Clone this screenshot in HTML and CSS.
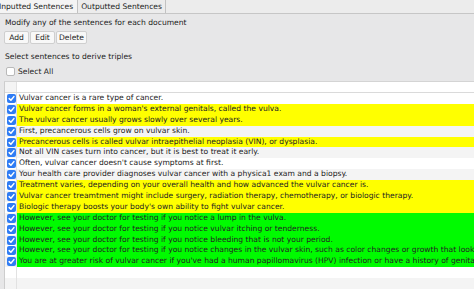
FILE: index.html
```html
<!DOCTYPE html>
<html lang="en">
<head>
  <meta charset="UTF-8">
  <meta name="viewport" content="width=device-width, initial-scale=1.0">
  <title>Sentences</title>
  <link rel="stylesheet" href="styles.css">
</head>
<body>
  <div class="tabs">
    <div class="tab active">Inputted Sentences</div>
    <div class="tab">Outputted Sentences</div>
  </div>

  <div class="panel">
    <p class="hint">Modify any of the sentences for each document</p>
    <div class="buttons">
      <button class="btn btn-add">Add</button>
      <button class="btn btn-edit">Edit</button>
      <button class="btn btn-delete">Delete</button>
    </div>
    <p class="hint">Select sentences to derive triples</p>
    <label class="select-all"><span class="box"></span>Select All</label>
  </div>

  <div class="table">
    <div class="row head"><div class="check"></div><div class="text"></div></div>

    <div class="row"><div class="check"><span class="box on"><svg viewBox="0 0 9 9"><path d="M2.2 4.6 L3.9 6.3 L6.9 2.6" /></svg></span></div><div class="text">Vulvar cancer is a rare type of cancer.</div></div>
    <div class="row yellow"><div class="check"><span class="box on"><svg viewBox="0 0 9 9"><path d="M2.2 4.6 L3.9 6.3 L6.9 2.6" /></svg></span></div><div class="text">Vulvar cancer forms in a woman's external genitals, called the vulva.</div></div>
    <div class="row yellow"><div class="check"><span class="box on"><svg viewBox="0 0 9 9"><path d="M2.2 4.6 L3.9 6.3 L6.9 2.6" /></svg></span></div><div class="text">The vulvar cancer usually grows slowly over several years.</div></div>
    <div class="row"><div class="check"><span class="box on"><svg viewBox="0 0 9 9"><path d="M2.2 4.6 L3.9 6.3 L6.9 2.6" /></svg></span></div><div class="text">First, precancerous cells grow on vulvar skin.</div></div>
    <div class="row yellow"><div class="check"><span class="box on"><svg viewBox="0 0 9 9"><path d="M2.2 4.6 L3.9 6.3 L6.9 2.6" /></svg></span></div><div class="text">Precancerous cells is called vulvar intraepithelial neoplasia (VIN), or dysplasia.</div></div>
    <div class="row"><div class="check"><span class="box on"><svg viewBox="0 0 9 9"><path d="M2.2 4.6 L3.9 6.3 L6.9 2.6" /></svg></span></div><div class="text">Not all VIN cases turn into cancer, but it is best to treat it early.</div></div>
    <div class="row"><div class="check"><span class="box on"><svg viewBox="0 0 9 9"><path d="M2.2 4.6 L3.9 6.3 L6.9 2.6" /></svg></span></div><div class="text">Often, vulvar cancer doesn't cause symptoms at first.</div></div>
    <div class="row"><div class="check"><span class="box on"><svg viewBox="0 0 9 9"><path d="M2.2 4.6 L3.9 6.3 L6.9 2.6" /></svg></span></div><div class="text">Your health care provider diagnoses vulvar cancer with a physica1 exam and a biopsy.</div></div>
    <div class="row yellow"><div class="check"><span class="box on"><svg viewBox="0 0 9 9"><path d="M2.2 4.6 L3.9 6.3 L6.9 2.6" /></svg></span></div><div class="text">Treatment varies, depending on your overall health and how advanced the vulvar cancer is.</div></div>
    <div class="row yellow"><div class="check"><span class="box on"><svg viewBox="0 0 9 9"><path d="M2.2 4.6 L3.9 6.3 L6.9 2.6" /></svg></span></div><div class="text">Vulvar cancer treamtment might include surgery, radiation therapy, chemotherapy, or biologic therapy.</div></div>
    <div class="row yellow"><div class="check"><span class="box on"><svg viewBox="0 0 9 9"><path d="M2.2 4.6 L3.9 6.3 L6.9 2.6" /></svg></span></div><div class="text">Biologic therapy boosts your body's own ability to fight vulvar cancer.</div></div>
    <div class="row green"><div class="check"><span class="box on"><svg viewBox="0 0 9 9"><path d="M2.2 4.6 L3.9 6.3 L6.9 2.6" /></svg></span></div><div class="text">However, see your doctor for testing if you notice a lump in the vulva.</div></div>
    <div class="row green"><div class="check"><span class="box on"><svg viewBox="0 0 9 9"><path d="M2.2 4.6 L3.9 6.3 L6.9 2.6" /></svg></span></div><div class="text">However, see your doctor for testing if you notice vulvar itching or tenderness.</div></div>
    <div class="row green"><div class="check"><span class="box on"><svg viewBox="0 0 9 9"><path d="M2.2 4.6 L3.9 6.3 L6.9 2.6" /></svg></span></div><div class="text">However, see your doctor for testing if you notice bleeding that is not your period.</div></div>
    <div class="row green"><div class="check"><span class="box on"><svg viewBox="0 0 9 9"><path d="M2.2 4.6 L3.9 6.3 L6.9 2.6" /></svg></span></div><div class="text">However, see your doctor for testing if you notice changes in the vulvar skin, such as color changes or growth that looks like a wart or ulcer.</div></div>
    <div class="row green"><div class="check"><span class="box on"><svg viewBox="0 0 9 9"><path d="M2.2 4.6 L3.9 6.3 L6.9 2.6" /></svg></span></div><div class="text">You are at greater risk of vulvar cancer if you've had a human papillomavirus (HPV) infection or have a history of genital warts.</div></div>

    <div class="row"><div class="check"></div><div class="text"></div></div>
    <div class="row"><div class="check"></div><div class="text"></div></div>
  </div>
</body>
</html>
```

FILE: styles.css
```css
html, body {
  margin: 0;
  height: 289px;
  overflow: hidden;
}
body {
  background: #e7e7e8;
  font-family: "DejaVu Sans", sans-serif;
  font-size: 7.6px;
  color: #222;
}

.tabs {
  display: flex;
  height: 13px;
  background: #ececec;
  border-bottom: 1px solid #c6c6c6;
}
.tab {
  line-height: 13px;
  padding: 0 3px;
  border-right: 1px solid #c2c2c2;
  color: #1e1e1e;
  white-space: nowrap;
}
.tab.active {
  padding: 0 4px 0 0;
  margin-left: -1px;
  background: #f4f4f4;
}

.panel {
  padding: 4px 4px 4px 4px;
}
.hint {
  margin: 0 0 0 1px;
  line-height: 10px;
}
.buttons {
  display: flex;
  gap: 1px;
  margin: 3px 0 8px 0;
}
.btn {
  height: 13px;
  padding: 0;
  font-family: inherit;
  font-size: 7.6px;
  color: #222;
  background: #f8f8f8;
  border: 1px solid #cfcfcf;
  border-radius: 2px;
}
.btn-add, .btn-edit {
  width: 25px;
}
.btn-delete {
  width: 31px;
}

.select-all {
  display: flex;
  align-items: center;
  gap: 3px;
  height: 11px;
  margin: 4px 0 0 2px;
}
.box {
  display: inline-block;
  box-sizing: border-box;
  width: 9px;
  height: 9px;
  border: 1px solid #b9b9b9;
  border-radius: 2px;
  background: #fff;
}
.box.on {
  border: none;
  background: #2f7cf4;
}
.box svg {
  display: block;
  width: 9px;
  height: 9px;
}
.box path {
  fill: none;
  stroke: #fff;
  stroke-width: 1.5;
  stroke-linecap: round;
  stroke-linejoin: round;
}

.table {
  margin-left: 4px;
  background: #fff;
  border-top: 1px solid #d4d4d4;
  border-left: 1px solid #cdcdcd;
}
.row {
  display: flex;
  height: 10.9px;
  line-height: 10.9px;
}
.row:nth-child(odd) {
  background: #f4f4f4;
}
.row.head {
  height: 10px;
  background: #fff;
  border-bottom: 1px solid #dadada;
}
.row.yellow {
  background: #ffff00;
}
.row.green {
  background: #00fb00;
}
.check {
  flex: none;
  width: 12px;
  display: flex;
  align-items: center;
  padding-left: 2px;
  box-sizing: border-box;
  border-right: 1px solid #e2e2e2;
  background: #fff;
}
.row:nth-child(odd) .check {
  background: #f4f4f4;
}
.text {
  flex: 1;
  padding-left: 2px;
  white-space: nowrap;
  overflow: hidden;
}
```
